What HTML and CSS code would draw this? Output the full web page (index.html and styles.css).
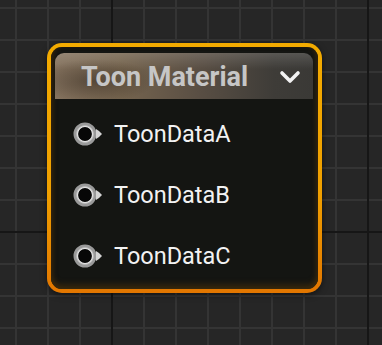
FILE: index.html
```html
<!DOCTYPE html>
<html lang="en">
<head>
  <meta charset="UTF-8" />
  <meta name="viewport" content="width=device-width, initial-scale=1.0"/>
  <title>Toon Material</title>
  <link rel="stylesheet" href="styles.css">
</head>
<body>
  <svg width="0" height="0" class="defs">
    <defs>
      <radialGradient id="ring" cx="0.5" cy="0.5" r="0.5">
        <stop offset="0.55" stop-color="#8a8a8a"/>
        <stop offset="0.78" stop-color="#f0f0f0"/>
        <stop offset="1" stop-color="#9a9a9a"/>
      </radialGradient>
    </defs>
  </svg>
  <div class="canvas">
    <div class="node">
      <div class="node-body">
        <div class="node-header">
          <span class="node-title">Toon Material</span>
          <svg class="chevron" width="22" height="14" viewBox="0 0 22 14">
            <path d="M3 3 L11 11 L19 3" fill="none" stroke="#f2f2f2" stroke-width="3.6" stroke-linecap="round" stroke-linejoin="round"/>
          </svg>
        </div>

        <div class="pins">
          <div class="pin-row">
            <svg class="pin" width="32" height="28" viewBox="0 0 32 28">
              <circle cx="12" cy="14" r="9.2" fill="#070707" stroke="url(#ring)" stroke-width="4.6"/>
              <path d="M23 9 Q26 10.5 29 14 Q26 17.5 23 19 Z" fill="#d4d4d4"/>
            </svg>
            <span class="pin-label">ToonDataA</span>
          </div>
          <div class="pin-row">
            <svg class="pin" width="32" height="28" viewBox="0 0 32 28">
              <circle cx="12" cy="14" r="9.2" fill="#070707" stroke="url(#ring)" stroke-width="4.6"/>
              <path d="M23 9 Q26 10.5 29 14 Q26 17.5 23 19 Z" fill="#d4d4d4"/>
            </svg>
            <span class="pin-label">ToonDataB</span>
          </div>
          <div class="pin-row">
            <svg class="pin" width="32" height="28" viewBox="0 0 32 28">
              <circle cx="12" cy="14" r="9.2" fill="#070707" stroke="url(#ring)" stroke-width="4.6"/>
              <path d="M23 9 Q26 10.5 29 14 Q26 17.5 23 19 Z" fill="#d4d4d4"/>
            </svg>
            <span class="pin-label">ToonDataC</span>
          </div>
        </div>
      </div>
    </div>
  </div>
</body>
</html>
```

FILE: styles.css
```css
:root {
  --grid-bg: #262626;
  --grid-minor: #343434;
  --grid-major: #161616;
  --node-bg: #141512;
  --title-color: #c6c6c6;
  --label-color: #f2f2f2;
}

body {
  margin: 0;
  padding: 0;
  font-family: Roboto, 'Noto Sans', sans-serif;
}

.defs {
  position: absolute;
}

.canvas {
  position: relative;
  width: 100%;
  height: 100vh;
  overflow: hidden;
  background-color: var(--grid-bg);
  background-image:
    linear-gradient(90deg, var(--grid-major) 2px, transparent 2px),
    linear-gradient(var(--grid-major) 2px, transparent 2px),
    linear-gradient(90deg, var(--grid-minor) 2px, transparent 2px),
    linear-gradient(var(--grid-minor) 2px, transparent 2px);
  background-size: 256px 256px, 256px 256px, 32px 32px, 32px 32px;
  background-position: 111px 0, 0 231px, 15px 0, 0 7px;
}

/* node sits on the graph canvas */
.node {
  position: absolute;
  left: 47px;
  top: 43px;
  width: 275px;
  height: 250px;
  box-sizing: border-box;
  padding: 4px;
  border-radius: 15px;
  background: linear-gradient(#f3ab00, #f0a000 60%, #e27600);
  box-shadow: 0 2px 6px rgba(0, 0, 0, 0.5);
}

.node-body {
  height: 100%;
  box-sizing: border-box;
  padding: 6px 5px 0 4px;
  border-radius: 11px;
  background: var(--node-bg);
  box-shadow: inset 0 -5px 6px -1px #3b2a0c, inset 4px 0 5px -2px #2e2210, inset -4px 0 5px -2px #2e2210;
}

.node-header {
  display: flex;
  align-items: center;
  justify-content: space-between;
  height: 46px;
  padding: 0 12px 0 26px;
  border-radius: 9px 9px 0 0;
  background:
    linear-gradient(rgba(255, 255, 255, 0.14), rgba(255, 255, 255, 0) 35%),
    radial-gradient(ellipse 60px 22px at 40px 28px, rgba(40, 30, 22, 0.45), transparent),
    linear-gradient(90deg, #85735f, #76654f 25%, #5a4f44 55%, #3e3c38 85%, #3a3936);
}

.node-title {
  font-size: 27px;
  font-weight: bold;
  color: var(--title-color);
  padding-top: 2px;
}

.chevron {
  display: block;
  margin-top: 2px;
}

.pins {
  padding-top: 4px;
}

.pin-row {
  display: flex;
  align-items: center;
  height: 61px;
  padding-left: 18px;
}

.pin {
  display: block;
  margin-right: 9px;
}

.pin-label {
  font-size: 23.5px;
  color: var(--label-color);
}
```
